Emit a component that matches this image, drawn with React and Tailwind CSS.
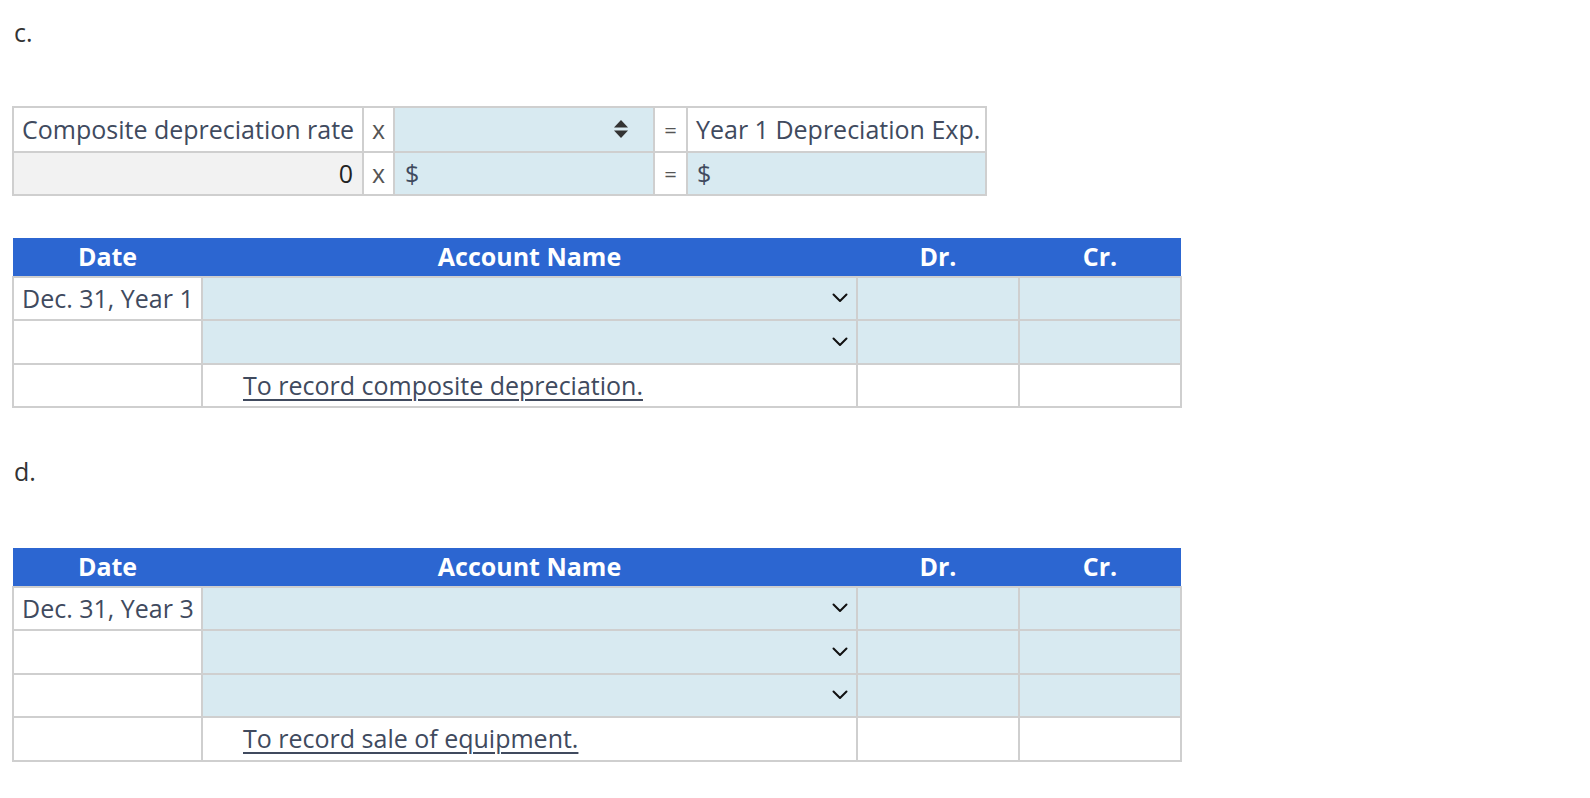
const font = { fontFamily: '"Open Sans", "Liberation Sans", sans-serif' };

const Stepper = () => (
  <svg width="16" height="20" viewBox="0 0 16 20" className="text-[#333]">
    <path d="M8 1 L15 8.5 H1 Z" fill="currentColor" />
    <path d="M8 19 L15 11.5 H1 Z" fill="currentColor" />
  </svg>
);

const Chevron = () => (
  <svg width="16" height="10" viewBox="0 0 16 10" fill="none" className="text-[#111]">
    <path d="M1.5 1.5 L8 8 L14.5 1.5" stroke="currentColor" strokeWidth="2" strokeLinecap="round" strokeLinejoin="round" />
  </svg>
);

const cell = 'border-2 border-[#cfcfcf]';

const Formula = () => (
  <table className="table-fixed w-[973px] border-collapse text-[25px] text-[#404a5e]">
    <colgroup>
      <col className="w-[350px]" />
      <col className="w-[31px]" />
      <col className="w-[260px]" />
      <col className="w-[33px]" />
      <col className="w-[299px]" />
    </colgroup>
    <tbody>
      <tr className="h-[44.5px]">
        <td className={`${cell} bg-white px-[8px] whitespace-nowrap`}>Composite depreciation rate</td>
        <td className={`${cell} bg-white text-center text-[#555]`}>x</td>
        <td className={`${cell} bg-[#d8eaf1] pr-[24px]`}>
          <div className="flex justify-end">
            <Stepper />
          </div>
        </td>
        <td className={`${cell} bg-white text-center text-[22px] text-[#555]`}>=</td>
        <td className={`${cell} bg-white px-[8px] whitespace-nowrap`}>Year 1 Depreciation Exp.</td>
      </tr>
      <tr className="h-[43.5px]">
        <td className={`${cell} bg-[#f2f2f2] px-[9px] text-right text-[#222]`}>0</td>
        <td className={`${cell} bg-white text-center text-[#555]`}>x</td>
        <td className={`${cell} bg-[#d8eaf1] px-[10px]`}>$</td>
        <td className={`${cell} bg-white text-center text-[22px] text-[#555]`}>=</td>
        <td className={`${cell} bg-[#d8eaf1] px-[9px]`}>$</td>
      </tr>
    </tbody>
  </table>
);

const Journal = ({ date, lines, memo }) => (
  <table className="table-fixed w-[1168px] border-collapse text-[25px] text-[#404a5e]">
    <colgroup>
      <col className="w-[189px]" />
      <col className="w-[655px]" />
      <col className="w-[162px]" />
      <col className="w-[162px]" />
    </colgroup>
    <thead>
      <tr className="h-[38px] bg-[#2c66d1] text-white">
        <th className="text-center font-bold">Date</th>
        <th className="text-center font-bold">Account Name</th>
        <th className="text-center font-bold">Dr.</th>
        <th className="text-center font-bold">Cr.</th>
      </tr>
    </thead>
    <tbody>
      {Array.from({ length: lines }).map((_, i) => (
        <tr key={i} className="h-[43.5px]">
          <td className={`${cell} bg-white px-[8px] whitespace-nowrap`}>{i === 0 ? date : ''}</td>
          <td className={`${cell} bg-[#d8eaf1] pr-[8px]`}>
            <div className="flex justify-end">
              <Chevron />
            </div>
          </td>
          <td className={`${cell} bg-[#d8eaf1]`} />
          <td className={`${cell} bg-[#d8eaf1]`} />
        </tr>
      ))}
      <tr className="h-[43.5px]">
        <td className={`${cell} bg-white`} />
        <td className={`${cell} bg-white pl-[40px]`}>
          <span className="underline underline-offset-[4px] decoration-[1.5px]">{memo}</span>
        </td>
        <td className={`${cell} bg-white`} />
        <td className={`${cell} bg-white`} />
      </tr>
    </tbody>
  </table>
);

export default function App() {
  return (
    <div className="min-h-screen bg-white pl-[12px]" style={font}>
      <p className="pt-[15px] pl-[2px] text-[25px] leading-[34px] text-[#333]">c.</p>
      <div className="mt-[57px]">
        <Formula />
      </div>
      <div className="mt-[42px]">
        <Journal date="Dec. 31, Year 1" lines={2} memo="To record composite depreciation." />
      </div>
      <p className="mt-[46px] pl-[2px] text-[25px] leading-[34px] text-[#333]">d.</p>
      <div className="mt-[60px]">
        <Journal date="Dec. 31, Year 3" lines={3} memo="To record sale of equipment." />
      </div>
    </div>
  );
}
